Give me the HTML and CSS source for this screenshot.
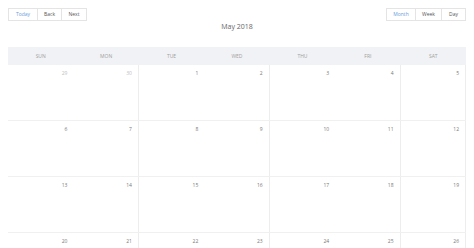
FILE: index.html
```html
<!DOCTYPE html>
<html>
<head>
<meta charset="utf-8">
<link rel="stylesheet" href="styles.css">
</head>
<body>
<div class="page">
  <div class="toolbar">
    <div class="btn-group">
      <button class="btn active">Today</button>
      <button class="btn">Back</button>
      <button class="btn">Next</button>
    </div>
    <div class="btn-group">
      <button class="btn active">Month</button>
      <button class="btn">Week</button>
      <button class="btn">Day</button>
    </div>
  </div>
  <div class="title">May 2018</div>
  <div class="calendar">
    <div class="head">
      <div>SUN</div><div>MON</div><div>TUE</div><div>WED</div><div>THU</div><div>FRI</div><div>SAT</div>
    </div>
    <div class="week">
      <div class="cell off">29</div><div class="cell off">30</div><div class="cell">1</div><div class="cell">2</div><div class="cell">3</div><div class="cell">4</div><div class="cell">5</div>
    </div>
    <div class="week">
      <div class="cell">6</div><div class="cell">7</div><div class="cell">8</div><div class="cell">9</div><div class="cell">10</div><div class="cell">11</div><div class="cell">12</div>
    </div>
    <div class="week">
      <div class="cell">13</div><div class="cell">14</div><div class="cell">15</div><div class="cell">16</div><div class="cell">17</div><div class="cell">18</div><div class="cell">19</div>
    </div>
    <div class="week">
      <div class="cell">20</div><div class="cell">21</div><div class="cell">22</div><div class="cell">23</div><div class="cell">24</div><div class="cell">25</div><div class="cell">26</div>
    </div>
  </div>
</div>
</body>
</html>
```

FILE: styles.css
```css
html, body {
  margin: 0;
  padding: 0;
  background: #fff;
  font-family: "Open Sans", "Liberation Sans", sans-serif;
  overflow: hidden;
  -webkit-font-smoothing: antialiased;
}
.page {
  padding: 8px 8px 0 8px;
}
.toolbar {
  display: flex;
  justify-content: space-between;
  height: 13px;
}
.btn-group {
  display: flex;
}
.btn {
  font-family: inherit;
  font-size: 5px;
  color: #555;
  background: #fff;
  border: 1px solid #e4e4e4;
  margin: 0 0 0 -1px;
  padding: 0;
  height: 13px;
  line-height: 11px;
}
.btn-group .btn:first-child { margin-left: 0; }
.btn-group:first-child .btn:nth-child(1) { width: 30px; }
.btn-group:first-child .btn:nth-child(2) { width: 25px; }
.btn-group:first-child .btn:nth-child(3) { width: 26px; }
.btn-group:last-child .btn:nth-child(1) { width: 30px; }
.btn-group:last-child .btn:nth-child(2) { width: 27px; }
.btn-group:last-child .btn:nth-child(3) { width: 25px; }
.btn.active { color: #6b9be0; }
.title {
  text-align: center;
  font-size: 7px;
  color: #666;
  line-height: 11px;
  height: 26px;
}
.calendar {
  width: 458px;
}
.head {
  display: grid;
  grid-template-columns: repeat(7, 1fr);
  background: #f1f2f5;
  height: 18px;
  line-height: 18px;
  font-size: 5px;
  color: #a0a0a0;
  text-align: center;
}
.week {
  display: grid;
  grid-template-columns: repeat(7, 1fr);
  height: 55px;
  border-bottom: 1px solid #f0f0f0;
}
.cell {
  text-align: right;
  font-size: 5px;
  color: #777;
  padding: 5px 6px 0 0;
}
.cell:nth-child(2n), .cell:last-child {
  border-right: 1px solid #ededed;
}
.cell.off { color: #c0c0c0; }
```
